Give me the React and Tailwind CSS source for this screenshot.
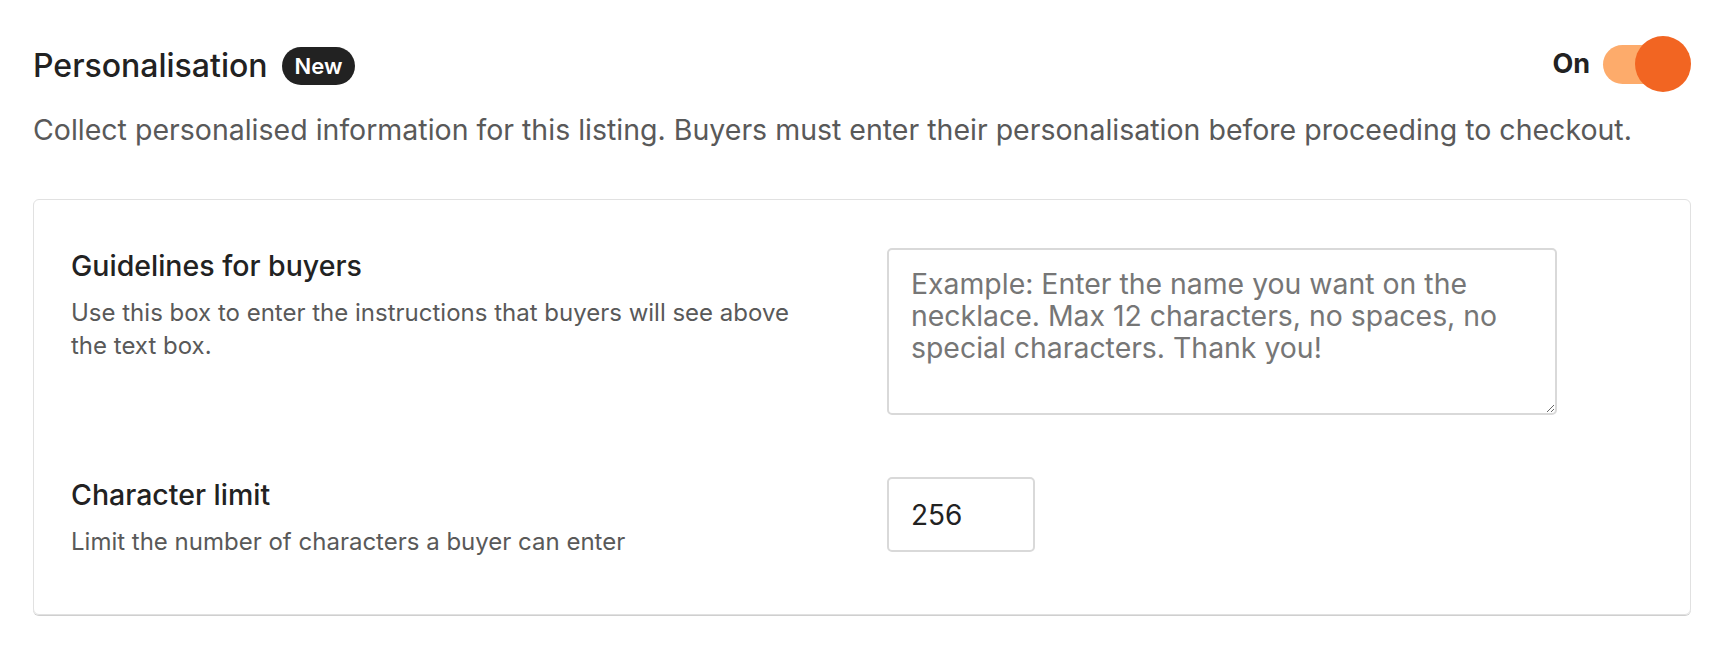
import React, { useState } from "react";

const App = () => {
  const [enabled, setEnabled] = useState(true);
  const [limit, setLimit] = useState("256");

  return (
    <div className="w-[1732px] h-[650px] bg-white font-[Inter,sans-serif] text-[#222222] pl-[33px] pr-[41px]">
      {/* Header */}
      <div className="flex items-center justify-between pt-[36px]">
        <div className="flex items-center gap-[14px] pt-[4px]">
          <h2 className="text-[32px] leading-[40px] font-medium">Personalisation</h2>
          <span className="h-[38px] px-[13px] rounded-full bg-[#222222] text-white text-[22px] font-semibold flex items-center">
            New
          </span>
        </div>
        <div className="flex items-center gap-[13px]">
          <span className="text-[27px] font-bold">{enabled ? "On" : "Off"}</span>
          <button
            onClick={() => setEnabled(!enabled)}
            className="relative w-[88px] h-[56px] flex items-center"
          >
            <span
              className={`block w-[76px] h-[39px] rounded-full ${
                enabled ? "bg-[#fdab6b]" : "bg-[#d6d6d6]"
              }`}
            />
            <span
              className={`absolute top-0 w-[56px] h-[56px] rounded-full ${
                enabled ? "right-0 bg-[#f26522]" : "left-0 bg-white shadow"
              }`}
            />
          </button>
        </div>
      </div>

      <p className="mt-[18px] text-[28.5px] leading-[40px] text-[#595959]">
        Collect personalised information for this listing. Buyers must enter their personalisation before proceeding to checkout.
      </p>

      {/* Settings card */}
      <div className="mt-[49px] border border-[#e1e1e1] rounded-[6px] shadow-[0_1px_0_#cfcfcf] pt-[48px] pl-[37px] pb-[56px]">
        <div className="flex">
          <div className="w-[816px] shrink-0 pr-[70px]">
            <h3 className="text-[28.5px] leading-[36px] font-medium">Guidelines for buyers</h3>
            <p className="mt-[12px] text-[24px] leading-[33px] text-[#595959]">
              Use this box to enter the instructions that buyers will see above the text box.
            </p>
          </div>
          <textarea
            className="w-[670px] h-[167px] border-2 border-[#d9d9d9] rounded-[5px] px-[22px] py-[18px] text-[28.4px] leading-[32px] text-[#222222] placeholder:text-[#767676] outline-none"
            placeholder="Example: Enter the name you want on the necklace. Max 12 characters, no spaces, no special characters. Thank you!"
          />
        </div>

        <div className="flex mt-[62px]">
          <div className="w-[816px] shrink-0 pr-[70px]">
            <h3 className="text-[28.5px] leading-[36px] font-medium">Character limit</h3>
            <p className="mt-[12px] text-[24px] leading-[33px] text-[#595959]">
              Limit the number of characters a buyer can enter
            </p>
          </div>
          <input
            value={limit}
            onChange={(e) => setLimit(e.target.value)}
            className="w-[148px] h-[75px] border-2 border-[#d9d9d9] rounded-[5px] px-[22px] text-[28px] text-[#222222] outline-none"
          />
        </div>
      </div>
    </div>
  );
};

export default App;
